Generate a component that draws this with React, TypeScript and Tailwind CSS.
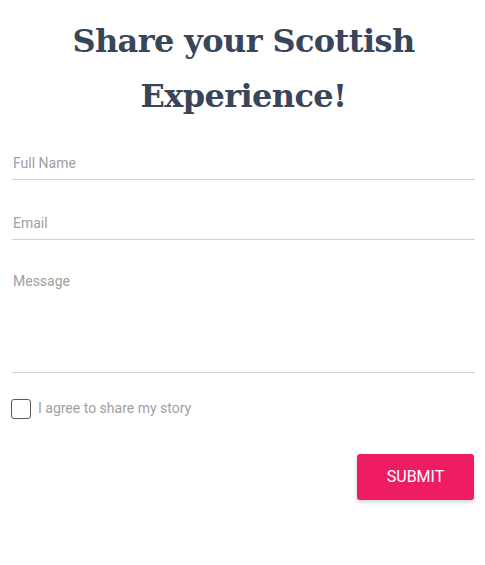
import React from "react";

function Field({ label, tall }: { label: string; tall?: boolean }) {
    return (
        <div
            className={
                tall
                    ? "h-[107px] border-b border-[#d4d4d4] pt-[3px] pl-[1px]"
                    : "h-[34px] border-b border-[#d4d4d4] flex items-center pl-[1px]"
            }
        >
            <span className="text-[14px] leading-[20px] text-[#a0a0a0]">{label}</span>
        </div>
    );
}

export default function App() {
    return (
        <div className="w-[485px] h-[565px] bg-white pl-[12px] pr-[10px] font-['Roboto',sans-serif]">
            <h1 className="pt-[14px] text-center text-[32px] leading-[55px] font-bold text-[#394558] font-['DejaVu_Serif',serif] tracking-[-0.6px]">
                Share your Scottish
                <br />
                Experience!
            </h1>

            <form className="mt-[22px]">
                <Field label="Full Name" />
                <div className="mt-[26px]">
                    <Field label="Email" />
                </div>
                <div className="mt-[26px]">
                    <Field label="Message" tall />
                </div>

                <label className="mt-[25px] flex items-center gap-[7px] -ml-[1px]">
                    <span className="w-[20px] h-[20px] rounded-[3px] border border-[#5a5a5a] bg-white" />
                    <span className="text-[14px] text-[#a0a0a0]">I agree to share my story</span>
                </label>

                <div className="mt-[35px] flex justify-end pr-[1px]">
                    <button
                        type="button"
                        className="w-[117px] h-[46px] rounded-[3px] bg-[#ee1d63] text-white text-[16px] shadow-[0_2px_4px_rgba(0,0,0,0.18)]"
                    >
                        SUBMIT
                    </button>
                </div>
            </form>
        </div>
    );
}
